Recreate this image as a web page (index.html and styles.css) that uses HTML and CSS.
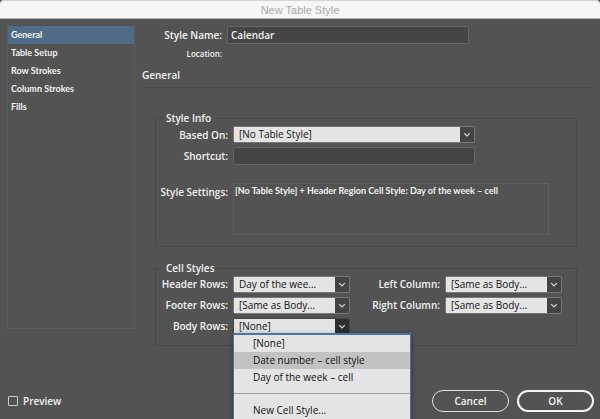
FILE: index.html
```html
<!DOCTYPE html>
<html lang="en">
<head>
<meta charset="utf-8">
<title>New Table Style</title>
<link rel="stylesheet" href="styles.css">
</head>
<body>
<div class="dialog">
  <header class="titlebar"><h1>New Table Style</h1></header>
  <div class="content">
    <nav class="sidebar">
      <a class="active" href="#general">General</a>
      <a href="#setup">Table Setup</a>
      <a href="#rows">Row Strokes</a>
      <a href="#columns">Column Strokes</a>
      <a href="#fills">Fills</a>
    </nav>
    <main class="main" id="general">
      <div class="name-row">
        <label for="name">Style Name:</label>
        <input class="field" id="name" type="text" value="Calendar">
      </div>
      <div class="location">Location:</div>
      <h2>General</h2>
      <fieldset class="info">
        <legend>Style Info</legend>
        <div class="form-row">
          <label for="based">Based On:</label>
          <div class="select wide">
            <select id="based"><option>[No Table Style]</option></select>
            <svg viewBox="0 0 14 16"><path d="M4 6.5 7 9.5 10 6.5"/></svg>
          </div>
        </div>
        <div class="form-row shortcut">
          <label for="shortcut">Shortcut:</label>
          <input class="field" id="shortcut" type="text">
        </div>
        <div class="form-row settings">
          <label for="settings">Style Settings:</label>
          <textarea id="settings" readonly>[No Table Style] + Header Region Cell Style: Day of the week – cell</textarea>
        </div>
      </fieldset>
      <fieldset class="cells">
        <legend>Cell Styles</legend>
        <div class="cell-grid">
          <label for="header">Header Rows:</label>
          <div class="select">
            <select id="header"><option>Day of the wee...</option></select>
            <svg viewBox="0 0 14 16"><path d="M4 6.5 7 9.5 10 6.5"/></svg>
          </div>
          <label for="left">Left Column:</label>
          <div class="select">
            <select id="left"><option>[Same as Body...</option></select>
            <svg viewBox="0 0 14 16"><path d="M4 6.5 7 9.5 10 6.5"/></svg>
          </div>
          <label for="footer">Footer Rows:</label>
          <div class="select">
            <select id="footer"><option>[Same as Body...</option></select>
            <svg viewBox="0 0 14 16"><path d="M4 6.5 7 9.5 10 6.5"/></svg>
          </div>
          <label for="right">Right Column:</label>
          <div class="select">
            <select id="right"><option>[Same as Body...</option></select>
            <svg viewBox="0 0 14 16"><path d="M4 6.5 7 9.5 10 6.5"/></svg>
          </div>
          <label for="body">Body Rows:</label>
          <div class="select open">
            <select id="body"><option>[None]</option></select>
            <svg viewBox="0 0 14 16"><path d="M4 6.5 7 9.5 10 6.5"/></svg>
            <div class="menu" role="menu">
              <button type="button" role="menuitem">[None]</button>
              <button type="button" role="menuitem" class="hover">Date number – cell style</button>
              <button type="button" role="menuitem">Day of the week – cell</button>
              <hr>
              <button type="button" role="menuitem">New Cell Style...</button>
              <hr class="last">
            </div>
          </div>
        </div>
      </fieldset>
    </main>
  </div>
  <footer class="footer">
    <label class="preview"><input type="checkbox">Preview</label>
    <div class="actions">
      <button type="button">Cancel</button>
      <button type="button" class="primary">OK</button>
    </div>
  </footer>
</div>
</body>
</html>
```
FILE: styles.css
```css
* { box-sizing: border-box; }

body {
  margin: 0;
  background: #535353;
  color: #f2f2f2;
  font: 600 10px/16px "Open Sans", "Noto Sans", sans-serif;
}

button, input, select, textarea { font: inherit; color: inherit; margin: 0; }

.dialog {
  display: flex;
  flex-direction: column;
  min-height: 100vh;
  overflow: hidden;
}

.titlebar {
  height: 19px;
  background: #f6f6f6;
  border-top: 1px solid #d4d4d4;
  border-bottom: 1px solid #b4b4b4;
  border-radius: 4px 4px 0 0;
  text-align: center;
}

.titlebar h1 {
  margin: 0;
  font: 400 11px/18px "Liberation Sans", sans-serif;
  color: #aaa;
}

.content {
  display: flex;
  gap: 7px;
  padding: 7px 10px 0 7px;
}

.sidebar {
  flex: 0 0 128px;
  margin-bottom: 30px;
  border: 1px solid #5c5c5c;
  border-top: 0;
}

.sidebar a {
  display: block;
  padding-left: 3px;
  font: 700 9px/18px Lato, "Open Sans", sans-serif;
  color: inherit;
  text-decoration: none;
}

.sidebar .active { background: #4f6b85; }

.main { flex: 1; min-width: 0; }

.name-row, .form-row { display: flex; gap: 5px; }

label { line-height: 18px; text-align: right; white-space: nowrap; }

.name-row label { flex: 0 0 80px; }

.field {
  width: 242px;
  height: 18px;
  padding: 0 3px;
  background: #454545;
  border: 1px solid #666;
  border-radius: 2px;
}

.location {
  width: 80px;
  padding-top: 2px;
  font-size: 8px;
  text-align: right;
}

h2 {
  margin: 5px 0 22px;
  padding-bottom: 4px;
  border-bottom: 1px solid #484848;
  font: inherit;
}

fieldset {
  margin: 0 13px 13px;
  padding: 0;
  border: 1px solid #494949;
  border-radius: 2px;
}

legend { margin-left: 7px; padding: 0 3px; }

.form-row label { flex: 0 0 72px; }

.shortcut { margin: 3px 0 18px; }

.settings { padding: 0 27px 11px 0; }

textarea {
  flex: 1;
  height: 52px;
  padding: 0 1px;
  background: none;
  border: 1px solid #5f5f5f;
  font: 700 9px/14px Lato, "Open Sans", sans-serif;
  resize: none;
}

.select {
  position: relative;
  width: 117px;
  height: 17px;
  background: #444;
  border: 1px solid #777;
  border-radius: 2px;
}

.select.wide { width: 242px; }

.select select {
  appearance: none;
  display: block;
  width: calc(100% - 14px);
  height: 15px;
  padding: 0 0 0 5px;
  background: #e4e4e4;
  border: 0;
  border-radius: 0;
  color: #111;
  font-weight: 500;
  line-height: 15px;
}

.select svg {
  position: absolute;
  top: 0;
  right: 0;
  width: 14px;
  height: 15px;
  fill: none;
  stroke: #ddd;
  stroke-width: 1.2;
  pointer-events: none;
}

.open { background: #2e2e2e; border-color: #444; }

.cell-grid {
  display: grid;
  grid-template-columns: 72px 117px 85px 117px;
  column-gap: 5px;
  row-gap: 4px;
  padding-bottom: 10px;
}

.cell-grid label { line-height: 17px; }

.menu {
  position: absolute;
  top: 14px;
  left: -1px;
  width: 178px;
  background: #e4e4e4;
  border: 1px solid #4776aa;
  border-top-width: 2px;
  box-shadow: 0 2px 6px #0006;
}

.menu button {
  display: block;
  width: 100%;
  height: 17px;
  padding: 0 0 0 19px;
  background: none;
  border: 0;
  color: #111;
  font-weight: 500;
  line-height: 17px;
  text-align: left;
}

.menu .hover { background: #c2c2c2; }

.menu hr {
  margin: 7px 0 8px;
  border: 0;
  border-top: 1px solid #a0a0a0;
}

.menu .last { margin-top: 0; }

.footer {
  display: flex;
  justify-content: space-between;
  align-items: center;
  margin-top: auto;
  padding: 0 6px 7px 8px;
}

.preview { display: flex; align-items: center; gap: 5px; }

.preview input {
  appearance: none;
  width: 10px;
  height: 10px;
  border: 1px solid #ccc;
  border-radius: 1px;
}

.actions { display: flex; gap: 8px; }

.actions button {
  width: 77px;
  height: 22px;
  padding: 0;
  background: none;
  border: 1px solid #ddd;
  border-radius: 11px;
}

.actions .primary { border: 2px solid #f4f4f4; }
```
